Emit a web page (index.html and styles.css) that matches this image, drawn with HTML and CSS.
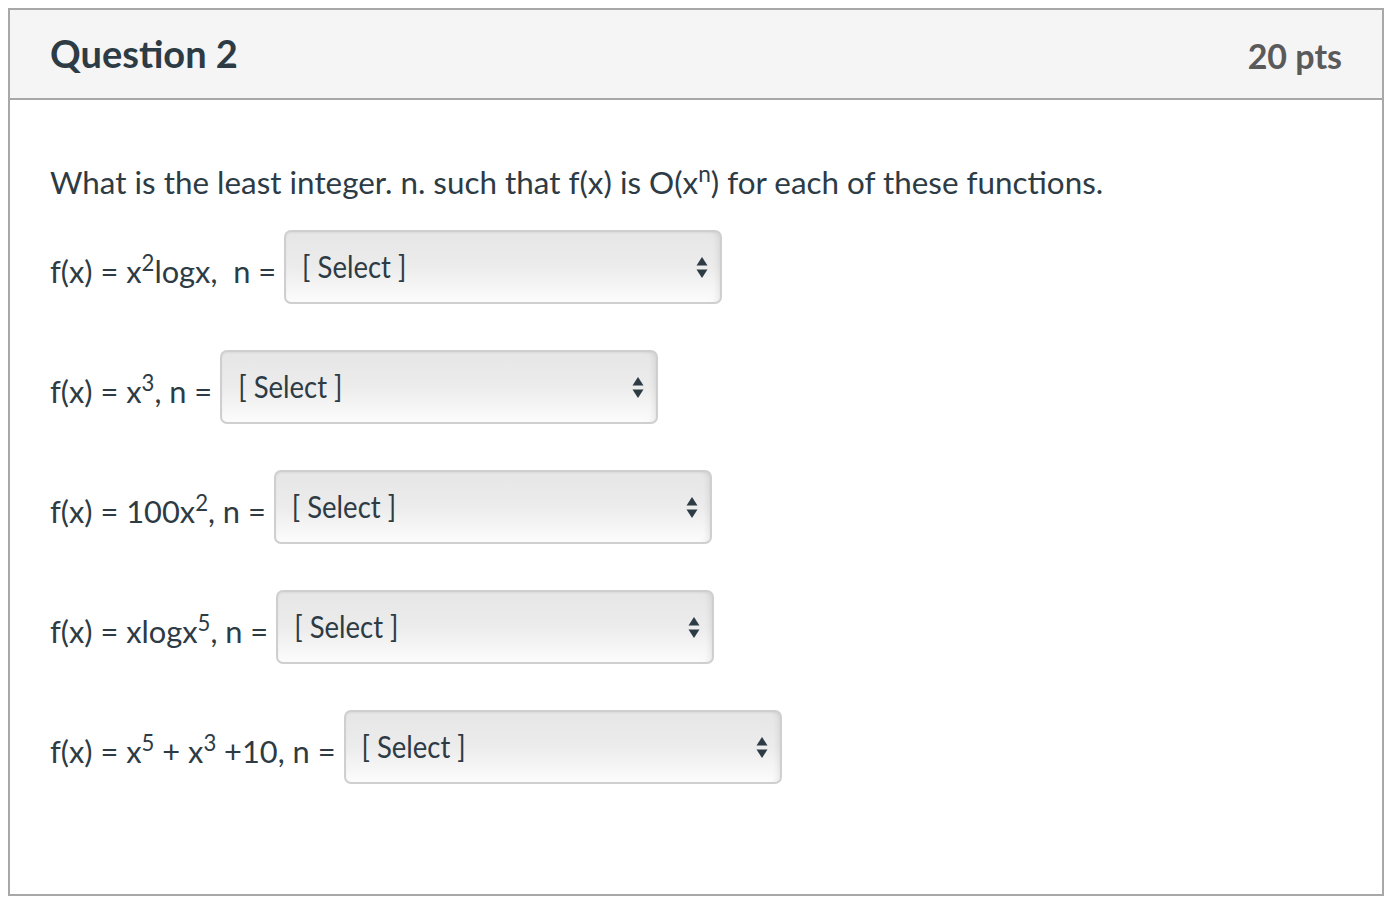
FILE: index.html
```html
<!DOCTYPE html>
<html>
<head>
<meta charset="utf-8">
<link rel="stylesheet" href="styles.css">
</head>
<body>
<div class="card">
  <div class="header">
    <div class="title">Question 2</div>
    <div class="pts">20 pts</div>
  </div>
  <div class="body">
    <p class="question">What is the least integer. n. such that f(x) is O(x<sup>n</sup>) for each of these functions.</p>
    <div class="row">
      <span class="label">f(x) = x<sup>2</sup>logx,&nbsp; n =</span>
      <div class="select"><span class="sel-text">[ Select ]</span><svg class="arrows" width="12" height="23" viewBox="0 0 12 23"><path d="M6 1 L11.5 9.5 L0.5 9.5 Z" fill="#2d3b45"/><path d="M0.5 13.5 L11.5 13.5 L6 22 Z" fill="#2d3b45"/></svg></div>
    </div>
    <div class="row">
      <span class="label">f(x) = x<sup>3</sup>, n =</span>
      <div class="select"><span class="sel-text">[ Select ]</span><svg class="arrows" width="12" height="23" viewBox="0 0 12 23"><path d="M6 1 L11.5 9.5 L0.5 9.5 Z" fill="#2d3b45"/><path d="M0.5 13.5 L11.5 13.5 L6 22 Z" fill="#2d3b45"/></svg></div>
    </div>
    <div class="row">
      <span class="label">f(x) = 100x<sup>2</sup>, n =</span>
      <div class="select"><span class="sel-text">[ Select ]</span><svg class="arrows" width="12" height="23" viewBox="0 0 12 23"><path d="M6 1 L11.5 9.5 L0.5 9.5 Z" fill="#2d3b45"/><path d="M0.5 13.5 L11.5 13.5 L6 22 Z" fill="#2d3b45"/></svg></div>
    </div>
    <div class="row">
      <span class="label">f(x) = xlogx<sup>5</sup>, n =</span>
      <div class="select"><span class="sel-text">[ Select ]</span><svg class="arrows" width="12" height="23" viewBox="0 0 12 23"><path d="M6 1 L11.5 9.5 L0.5 9.5 Z" fill="#2d3b45"/><path d="M0.5 13.5 L11.5 13.5 L6 22 Z" fill="#2d3b45"/></svg></div>
    </div>
    <div class="row">
      <span class="label">f(x) = x<sup>5</sup> + x<sup>3</sup> +10, n =</span>
      <div class="select"><span class="sel-text">[ Select ]</span><svg class="arrows" width="12" height="23" viewBox="0 0 12 23"><path d="M6 1 L11.5 9.5 L0.5 9.5 Z" fill="#2d3b45"/><path d="M0.5 13.5 L11.5 13.5 L6 22 Z" fill="#2d3b45"/></svg></div>
    </div>
  </div>
</div>
</body>
</html>
```

FILE: styles.css
```css
html, body {
  margin: 0;
  padding: 0;
  background: #ffffff;
}
body {
  padding: 8px;
  font-family: Lato, "Open Sans", sans-serif;
  color: #2d3b45;
}
.card {
  border: 2px solid #a8a8a8;
  box-sizing: border-box;
  height: 888px;
}
.header {
  background: #f5f5f5;
  border-bottom: 2px solid #a8a8a8;
  height: 88px;
  display: flex;
  align-items: center;
  justify-content: space-between;
  padding: 0 40px;
}
.title {
  font-size: 38px;
  font-weight: 700;
  color: #2d3b45;
  margin-top: -2px;
}
.pts {
  font-size: 34px;
  font-weight: 700;
  color: #5a5a5a;
  margin-top: 2px;
}
.body {
  padding: 58px 40px 0 40px;
}
.question {
  margin: 0 0 24px 0;
  font-size: 31.4px;
  line-height: 48px;
}
sup {
  font-size: 0.72em;
  line-height: 0;
  vertical-align: 0.55em;
}
.row {
  display: flex;
  align-items: center;
  height: 74px;
  margin-bottom: 46px;
}
.label {
  font-size: 30.8px;
  white-space: nowrap;
  margin-right: 8px;
  margin-top: 8px;
}
.select {
  width: 438px;
  height: 74px;
  box-sizing: border-box;
  border: 2px solid #cfcfcf;
  border-radius: 7px;
  background: linear-gradient(to bottom, #e6e6e6 0%, #ececec 50%, #fcfcfc 100%);
  box-shadow: inset -6px 0 6px -4px rgba(0,0,0,0.08), inset 0 1px 2px rgba(0,0,0,0.05);
  display: flex;
  align-items: center;
  justify-content: space-between;
  padding: 0 12px 0 16px;
}
.sel-text {
  display: inline-block;
  font-size: 27.5px;
  color: #2d3b45;
  margin-top: -2px;
  transform: scaleY(1.1);
}
.arrows {
  display: block;
}
```
